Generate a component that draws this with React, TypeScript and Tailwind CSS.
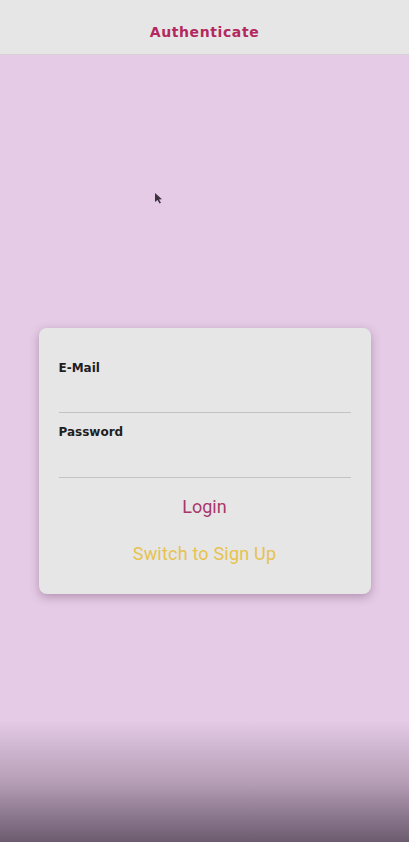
import { useState } from 'react';

export default function App() {
  const [email, setEmail] = useState('');
  const [password, setPassword] = useState('');

  return (
    <div
      className="relative flex h-[842px] w-[409px] flex-col overflow-hidden bg-[#e5cbe5]"
      style={{ fontFamily: 'Roboto, "Liberation Sans", sans-serif' }}
    >
      {/* header */}
      <header className="flex h-[55px] shrink-0 items-center justify-center border-b border-[#d6d0d6] bg-[#e6e6e6] pt-[11px]">
        <h1 className="font-['DejaVu_Sans',sans-serif] text-[14px] font-bold tracking-[0.6px] text-[#b3285e]">Authenticate</h1>
      </header>

      {/* body */}
      <main className="flex flex-1 flex-col items-center pt-[273px]">
        <form
          onSubmit={e => e.preventDefault()}
          className="flex w-[332px] flex-col rounded-[8px] bg-[#e6e6e6] px-[20px] pb-[30px] pt-[33px] shadow-[0_3px_10px_rgba(80,40,80,0.35)]"
        >
          <label className="flex flex-col">
            <span className="font-['DejaVu_Sans',sans-serif] text-[12px] font-bold leading-[14px] text-[#1f1f1f]">E-Mail</span>
            <input
              type="email"
              value={email}
              onChange={e => setEmail(e.target.value)}
              className="h-[38px] border-b border-[#c2c2c2] bg-transparent text-[14px] outline-none"
            />
          </label>
          <label className="mt-[12px] flex flex-col">
            <span className="font-['DejaVu_Sans',sans-serif] text-[12px] font-bold leading-[14px] text-[#1f1f1f]">Password</span>
            <input
              type="password"
              value={password}
              onChange={e => setPassword(e.target.value)}
              className="h-[39px] border-b border-[#c2c2c2] bg-transparent text-[14px] outline-none"
            />
          </label>
          <button type="submit" className="mt-[19px] text-[18px] leading-[20px] text-[#a8386a]">
            Login
          </button>
          <button type="button" className="mt-[27px] text-[18px] leading-[20px] tracking-[0.2px] text-[#e6c24e]">
            Switch to Sign Up
          </button>
        </form>
      </main>

      {/* bottom fade */}
      <div className="pointer-events-none absolute bottom-0 left-0 h-[122px] w-full bg-gradient-to-b from-[#e5cbe5] via-[#b79fb8] to-[#6c5b6f]" />

      {/* cursor */}
      <svg
        aria-hidden
        className="pointer-events-none absolute left-[155px] top-[193px]"
        width="8"
        height="11"
        viewBox="0 0 8 11"
      >
        <path d="M0 0 L0 9 L2.5 7 L4.5 10.5 L6 9.8 L4 6.5 L7 6.3 Z" fill="#3d3340" />
      </svg>
    </div>
  );
}
